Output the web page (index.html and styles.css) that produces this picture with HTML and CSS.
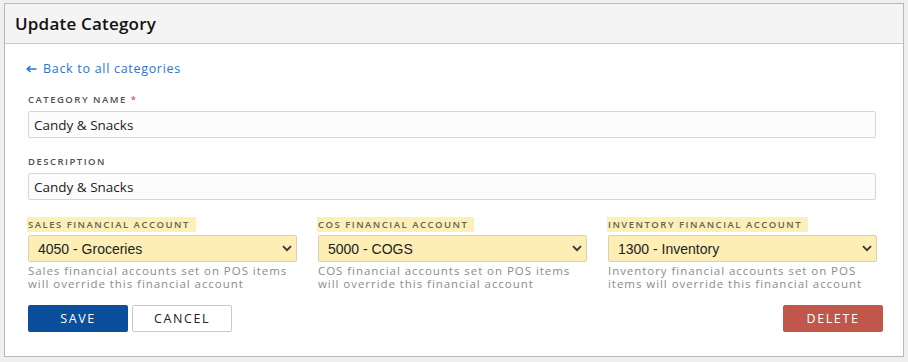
FILE: index.html
```html
<html lang="en">
<head>
    <meta charset="UTF-8">
    <title>Update Category</title>
    <link rel="stylesheet" href="styles.css">
</head>
<body>

    <div class="card">
        <div class="card-header">
            <h1>Update Category</h1>
        </div>

        <div class="card-body">
            <a class="back-link" href="#">
                <svg class="back-arrow" width="11" height="8" viewBox="0 0 11 8"><path d="M10.5 4 H1.5 M4.5 1 L1.2 4 L4.5 7" fill="none" stroke="#2f74d0" stroke-width="1.6"/></svg>
                Back to all categories
            </a>

            <div class="field">
                <label class="field-label">Category Name <span class="required">*</span></label>
                <input class="text-input" type="text" value="Candy &amp; Snacks">
            </div>

            <div class="field">
                <label class="field-label">Description</label>
                <input class="text-input" type="text" value="Candy &amp; Snacks">
            </div>

            <div class="account-row">
                <div class="account-col">
                    <label class="field-label highlight">Sales Financial Account</label>
                    <div class="select-wrap">
                        <select class="select-input">
                            <option>4050 - Groceries</option>
                        </select>
                        <svg class="chevron" width="10" height="7" viewBox="0 0 10 7"><path d="M1 1.2 L5 5.2 L9 1.2" fill="none" stroke="#333" stroke-width="1.8"/></svg>
                    </div>
                    <p class="help-text">Sales financial accounts set on POS items will override this financial account</p>
                </div>
                <div class="account-col">
                    <label class="field-label highlight">COS Financial Account</label>
                    <div class="select-wrap">
                        <select class="select-input">
                            <option>5000 - COGS</option>
                        </select>
                        <svg class="chevron" width="10" height="7" viewBox="0 0 10 7"><path d="M1 1.2 L5 5.2 L9 1.2" fill="none" stroke="#333" stroke-width="1.8"/></svg>
                    </div>
                    <p class="help-text">COS financial accounts set on POS items will override this financial account</p>
                </div>
                <div class="account-col">
                    <label class="field-label highlight">Inventory Financial Account</label>
                    <div class="select-wrap">
                        <select class="select-input">
                            <option>1300 - Inventory</option>
                        </select>
                        <svg class="chevron" width="10" height="7" viewBox="0 0 10 7"><path d="M1 1.2 L5 5.2 L9 1.2" fill="none" stroke="#333" stroke-width="1.8"/></svg>
                    </div>
                    <p class="help-text">Inventory financial accounts set on POS items will override this financial account</p>
                </div>
            </div>

            <div class="actions">
                <button class="btn btn-save">Save</button>
                <button class="btn btn-cancel">Cancel</button>
                <button class="btn btn-delete">Delete</button>
            </div>
        </div>
    </div>

</body>
</html>
```

FILE: styles.css
```css
body {
    font-family: 'Open Sans', 'Liberation Sans', sans-serif;
    background-color: #efeff1;
    margin: 0;
    padding: 3px 0 0 4px;
}

.card {
    width: 898px;
    background: #fff;
    border: 1px solid #b9b9bb;
}

.card-header {
    height: 39px;
    background: #f4f4f4;
    border-bottom: 1px solid #c9c9c9;
    display: flex;
    align-items: center;
    padding-left: 10px;
}

h1 {
    font-size: 17px;
    font-weight: 600;
    color: #111;
    margin: 0;
    letter-spacing: 0.2px;
}

.card-body {
    padding: 17px 27px 24px 23px;
}

.back-link {
    display: flex;
    align-items: center;
    gap: 6px;
    font-size: 12.5px;
    line-height: 16px;
    color: #2f74d0;
    text-decoration: none;
    letter-spacing: 0.7px;
    margin-left: -2px;
}

.field {
    margin-top: 17px;
}

.field + .field {
    margin-top: 18px;
}

.field-label {
    display: block;
    font-size: 9.5px;
    font-weight: 600;
    line-height: 12px;
    letter-spacing: 1.5px;
    text-transform: uppercase;
    color: #4f4f58;
    margin-bottom: 5px;
}

.required {
    color: #d9534f;
}

.text-input {
    display: block;
    box-sizing: border-box;
    width: 100%;
    height: 27px;
    border: 1px solid #d6d6d6;
    border-radius: 2px;
    background: #fcfcfc;
    padding: 0 5px;
    font-family: 'Open Sans', sans-serif;
    font-size: 13.5px;
    color: #222;
}

.account-row {
    display: grid;
    grid-template-columns: repeat(3, 269px);
    column-gap: 21px;
    margin-top: 17px;
}

.field-label.highlight {
    display: inline-block;
    background: #fcefb8;
    line-height: 15px;
    padding: 0 6px 0 1px;
    margin-left: -1px;
    margin-bottom: 3px;
    color: #656253;
}

.select-wrap {
    position: relative;
}

.select-input {
    display: block;
    box-sizing: border-box;
    width: 100%;
    height: 27px;
    appearance: none;
    -webkit-appearance: none;
    border: 1px solid #d9d3ad;
    border-radius: 2px;
    background: #fdeeb5;
    padding: 0 9px;
    font-family: 'Liberation Sans', Arial, sans-serif;
    font-size: 14px;
    color: #222;
}

.chevron {
    position: absolute;
    right: 5px;
    top: 10px;
    pointer-events: none;
}

.help-text {
    margin: 2px 0 0 0;
    font-size: 11.5px;
    line-height: 13px;
    letter-spacing: 0.95px;
    color: #8c8c8c;
}

.actions {
    display: flex;
    gap: 4px;
    margin-top: 15px;
}

.btn {
    width: 100px;
    height: 27px;
    font-family: 'Open Sans', sans-serif;
    font-size: 12.5px;
    font-weight: 500;
    letter-spacing: 1.6px;
    text-transform: uppercase;
    border-radius: 2px;
    cursor: pointer;
}

.btn-save {
    background: #0b4f9c;
    color: #fff;
    border: none;
}

.btn-cancel {
    background: #fff;
    color: #222;
    border: 1px solid #c9c9c9;
}

.btn-delete {
    background: #c0574a;
    color: #fff;
    border: none;
    margin-left: auto;
    margin-right: -7px;
}
```
